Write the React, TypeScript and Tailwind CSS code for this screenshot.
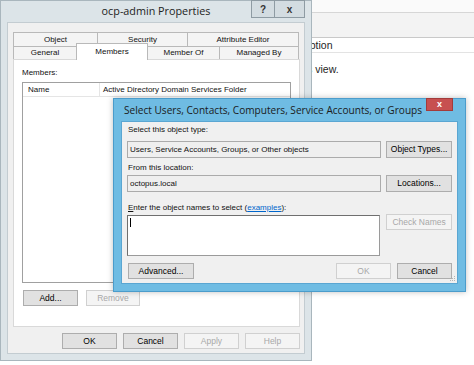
import React from 'react'

type BtnProps = { label: React.ReactNode; w: string; disabled?: boolean }

const Btn = ({ label, w, disabled }: BtnProps) => (
  <div
    className={`${w} h-[16px] flex items-center justify-center border text-[8.5px] ${
      disabled
        ? 'bg-[#f4f4f4] border-[#d0d0d0] text-[#a8a8a8]'
        : 'bg-[#e1e1e1] border-[#adadad] text-black'
    }`}
  >
    {label}
  </div>
)

type TabProps = { label: string; w: string; first?: boolean; active?: boolean }

const Tab = ({ label, w, first, active }: TabProps) => (
  <div
    className={`${w} ${first ? '' : '-ml-px'} flex items-center justify-center border border-b-0 border-[#b9b9b9] ${
      active ? 'relative z-10 h-[17px] -mb-px bg-white' : 'h-full bg-[#f4f4f4]'
    }`}
  >
    {label}
  </div>
)

const BackWindow = () => (
  <div className="absolute left-[250px] top-0 w-[224px] h-full bg-white flex flex-col">
    <div className="h-[13px] bg-[#fafafa] border-b border-[#d6d6d6]" />
    <div className="h-[25px] bg-[#f3f3f3] border-b border-[#c9c9c9]" />
    <div className="h-[15px] border-b border-[#e3e3e3] flex items-center pl-[30px] pt-[2px] text-[10.5px] text-[#1e1e1e]">
      Description
    </div>
    <div className="mt-[10px] pl-[46px] text-[10.5px] text-[#1e1e1e] leading-[12px]">this view.</div>
  </div>
)

const PropertiesWindow = () => (
  <div className="absolute left-0 top-0 w-[312px] h-[361px] bg-[#dce4e8] border border-[#a9b6bd] flex flex-col">
    {/* title bar */}
    <div className="relative h-[21px] flex items-center justify-center">
      <span className="font-['Open_Sans',sans-serif] text-[10.8px] text-[#222] leading-none">
        ocp-admin Properties
      </span>
      <div className="absolute right-[6px] -top-px flex">
        <div className="w-[24px] h-[18px] flex items-center justify-center bg-[#d3dce1] border border-[#8e9ba3] text-[10px] font-bold text-[#333]">
          ?
        </div>
        <div className="w-[31px] h-[18px] -ml-px flex items-center justify-center bg-[#d3dce1] border border-[#8e9ba3] text-[10px] font-bold text-[#333]">
          x
        </div>
      </div>
    </div>

    {/* body */}
    <div className="flex-1 mx-[6px] mb-[6px] bg-[#f0f0f0] border border-[#c3ccd1] flex flex-col pl-[5px] pt-[9px]">
      <div className="flex h-[14px]">
        <Tab label="Object" w="w-[85px]" first />
        <Tab label="Security" w="w-[91px]" />
        <Tab label="Attribute Editor" w="w-[112px]" />
      </div>
      <div className="flex items-end h-[13px]">
        <Tab label="General" w="w-[64px]" first />
        <Tab label="Members" w="w-[72px]" active />
        <Tab label="Member Of" w="w-[73px]" />
        <Tab label="Managed By" w="w-[80px]" />
      </div>

      {/* tab panel */}
      <div className="w-[287px] h-[268px] bg-white border border-[#d9d9d9] flex flex-col px-[8px]">
        <div className="mt-[8px] h-[10px] leading-[10px]">Members:</div>
        <div className="mt-[4px] h-[201px] border border-[#a0a0a0] flex flex-col">
          <div className="h-[14px] flex border-b border-[#e5e5e5]">
            <div className="w-[77px] pl-[5px] flex items-center border-r border-[#e5e5e5]">Name</div>
            <div className="flex-1 pl-[3px] flex items-center">Active Directory Domain Services Folder</div>
          </div>
        </div>
        <div className="mt-[7px] ml-px flex gap-[8px]">
          <Btn label="Add..." w="w-[55px]" />
          <Btn label="Remove" w="w-[54px]" disabled />
        </div>
      </div>

      <div className="mt-[6px] w-[287px] flex justify-end gap-[6px]">
        <Btn label="OK" w="w-[55px]" />
        <Btn label="Cancel" w="w-[55px]" />
        <Btn label="Apply" w="w-[55px]" disabled />
        <Btn label="Help" w="w-[55px]" disabled />
      </div>
    </div>
  </div>
)

const SelectDialog = () => (
  <div className="absolute left-[113px] top-[98px] w-[353px] h-[194px] bg-[#6fbce3] border border-[#4b9ccb] flex flex-col shadow-[0_0_6px_rgba(0,0,0,0.25)]">
    <div className="relative h-[22px] flex items-center pl-[10px]">
      <span className="font-['Open_Sans',sans-serif] text-[10.1px] text-[#1b1b1b] leading-none">
        Select Users, Contacts, Computers, Service Accounts, or Groups
      </span>
      <div className="absolute right-[12px] -top-px w-[27px] h-[13px] bg-[#c75050] border border-[#a33b3b] flex items-center justify-center text-white text-[9px] font-bold leading-none">
        x
      </div>
    </div>

    <div className="flex-1 mx-[7px] mb-[7px] bg-[#f0f0f0] border border-[#5aa6d2] flex flex-col px-[5px] pt-[3px] relative">
      <div className="ml-px h-[10px] leading-[10px]">Select this object type:</div>
      <div className="mt-[6px] flex gap-[5px]">
        <div className="w-[255px] h-[17px] bg-[#efefef] border border-[#ababab] flex items-center pl-[2px]">
          Users, Service Accounts, Groups, or Other objects
        </div>
        <Btn label="Object Types..." w="w-[66px] h-[17px]" />
      </div>

      <div className="mt-[5px] ml-px h-[10px] leading-[10px]">From this location:</div>
      <div className="mt-[2px] flex gap-[5px]">
        <div className="w-[255px] h-[17px] bg-[#efefef] border border-[#ababab] flex items-center pl-[2px]">
          octopus.local
        </div>
        <Btn label="Locations..." w="w-[66px] h-[17px]" />
      </div>

      <div className="mt-[11px] ml-px h-[10px] leading-[10px]">
        <span className="underline">E</span>nter the object names to select (
        <span className="text-[#0066cc] underline">examples</span>):
      </div>
      <div className="mt-[2px] flex items-start gap-[6px]">
        <div className="w-[254px] h-[41px] bg-white border border-[#9a9a9a] border-t-[#6f6f6f] border-l-[#6f6f6f] pl-[2px] pt-[2px]">
          <div className="w-px h-[9px] bg-black" />
        </div>
        <Btn label="Check Names" w="w-[66px] -mt-px" disabled />
      </div>

      <div className="mt-[7px] flex items-center">
        <div className="ml-px">
          <Btn label="Advanced..." w="w-[66px]" />
        </div>
        <div className="ml-auto flex gap-[6px]">
          <Btn label="OK" w="w-[55px]" disabled />
          <Btn label="Cancel" w="w-[55px]" />
        </div>
      </div>

      <svg className="absolute right-[1px] bottom-[1px]" width="6" height="6" viewBox="0 0 6 6">
        <rect x="4" y="0" width="1" height="1" fill="#b5b5b5" />
        <rect x="2" y="2" width="1" height="1" fill="#b5b5b5" />
        <rect x="4" y="2" width="1" height="1" fill="#b5b5b5" />
        <rect x="0" y="4" width="1" height="1" fill="#b5b5b5" />
        <rect x="2" y="4" width="1" height="1" fill="#b5b5b5" />
        <rect x="4" y="4" width="1" height="1" fill="#b5b5b5" />
      </svg>
    </div>
  </div>
)

const App = () => {
  return (
    <div className="relative w-[474px] h-[365px] overflow-hidden bg-white font-['Liberation_Sans',Arial,sans-serif] text-[8px] text-[#111]">
      <BackWindow />
      <PropertiesWindow />
      <SelectDialog />
    </div>
  )
}

export default App
